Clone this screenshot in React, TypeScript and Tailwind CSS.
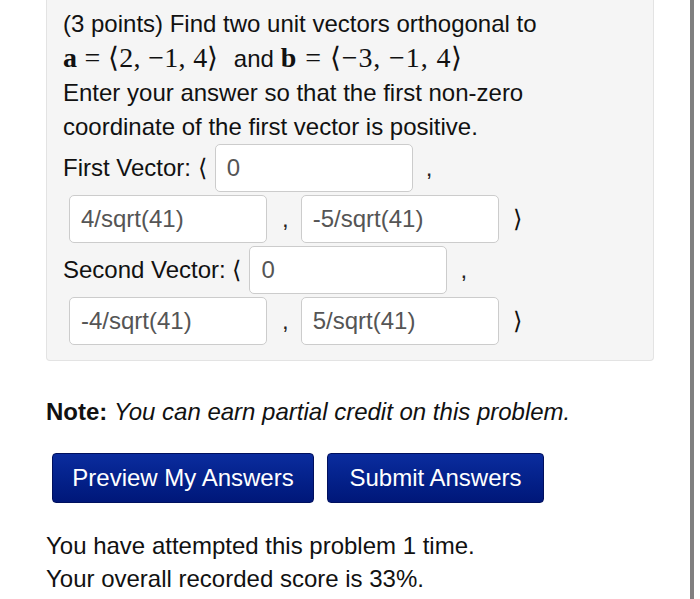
const sans = "font-['Helvetica','Liberation_Sans',Arial,sans-serif]";
const serif = "font-['Liberation_Serif','Times_New_Roman',serif]";

const Field = ({ value, className = "" }: { value: string; className?: string }) => (
  <div
    className={`h-[48px] w-[198px] rounded-[5px] border border-[#cccccc] bg-white pl-[11px] flex items-center text-[24px] text-[#555555] ${className}`}
  >
    {value}
  </div>
);

const Comma = ({ className = "" }: { className?: string }) => (
  <span className={`text-[24px] text-[#222] ${className}`}>,</span>
);

export default function App() {
  return (
    <div className={`flex h-[599px] w-[700px] overflow-hidden bg-white text-[#111] ${sans}`}>
      <div className="w-[690px] shrink-0">
        <div className="ml-[46px] w-[608px] rounded-b-[4px] border border-t-0 border-[#e3e3e3] bg-[#f5f5f5] pl-[16px] pt-[7px] pb-[15px]">
          <div className="text-[24px] leading-[34px]">
            <p>(3 points) Find two unit vectors orthogonal to</p>
            <p>
              <span className={`${serif} text-[28px] tracking-[0.3px]`}>
                <b>a</b> = ⟨2, −1, 4⟩
              </span>
              <span className="ml-[15px]">and</span>
              <span className={`${serif} ml-[7px] text-[28px] tracking-[0.9px]`}>
                <b>b</b> = ⟨−3, −1, 4⟩
              </span>
            </p>
            <p>Enter your answer so that the first non-zero</p>
            <p>coordinate of the first vector is positive.</p>
          </div>

          <div className="flex flex-col gap-[3px] text-[24px]">
            <div className="flex h-[48px] items-center">
              <span>
                First Vector: <span className={serif}>⟨</span>
              </span>
              <Field value="0" className="ml-[8px]" />
              <Comma className="ml-[13px]" />
            </div>
            <div className="flex h-[48px] items-center pl-[6px]">
              <Field value="4/sqrt(41)" />
              <Comma className="ml-[15px] mr-[12px]" />
              <Field value="-5/sqrt(41)" />
              <span className={`${serif} ml-[14px]`}>⟩</span>
            </div>
            <div className="flex h-[48px] items-center">
              <span>
                Second Vector: <span className={serif}>⟨</span>
              </span>
              <Field value="0" className="ml-[8px]" />
              <Comma className="ml-[13px]" />
            </div>
            <div className="flex h-[48px] items-center pl-[6px]">
              <Field value="-4/sqrt(41)" />
              <Comma className="ml-[15px] mr-[12px]" />
              <Field value="5/sqrt(41)" />
              <span className={`${serif} ml-[14px]`}>⟩</span>
            </div>
          </div>
        </div>

        <p className="ml-[46px] mt-[36px] text-[24px] leading-[30px]">
          <b>Note:</b> <i>You can earn partial credit on this problem.</i>
        </p>

        <div className="ml-[52px] mt-[26px] flex gap-[13px]">
          <button className="h-[50px] w-[262px] rounded-[4px] border border-[#00105e] bg-gradient-to-b from-[#0b2c9e] to-[#001779] text-[24px] text-white">
            Preview My Answers
          </button>
          <button className="h-[50px] w-[217px] rounded-[4px] border border-[#00105e] bg-gradient-to-b from-[#0b2c9e] to-[#001779] text-[24px] text-white">
            Submit Answers
          </button>
        </div>

        <div className="ml-[46px] mt-[26px] text-[24px] leading-[33px]">
          <p>You have attempted this problem 1 time.</p>
          <p>Your overall recorded score is 33%.</p>
        </div>
      </div>
      <div className="h-full w-[4px] bg-[#808080]" />
    </div>
  );
}
